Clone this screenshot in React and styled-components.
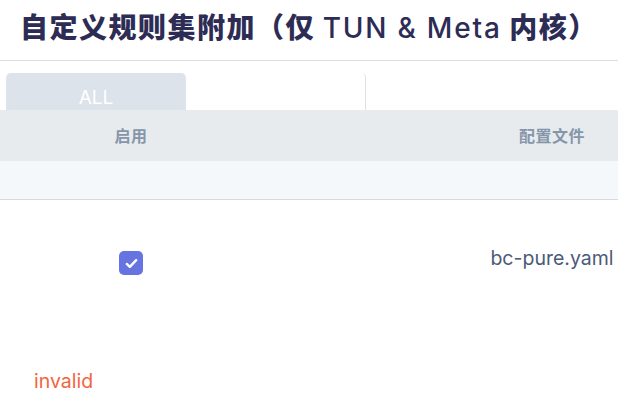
import React from "react";
import styled, { createGlobalStyle } from "styled-components";

const Global = createGlobalStyle`
  html, body {
    margin: 0;
    padding: 0;
    background: #fff;
    font-family: Inter, "Noto Sans", "Noto Sans CJK SC", sans-serif;
    overflow: hidden;
  }
`;

const Page = styled.div`
  width: 618px;
  height: 397px;
  display: flex;
  flex-direction: column;
`;

const Header = styled.header`
  height: 61px;
  border-bottom: 1px solid #dedede;
  display: flex;
  align-items: center;
  padding: 0 20px 8px;
  box-sizing: border-box;
`;

const Title = styled.h1`
  margin: 0;
  font-size: 28px;
  font-weight: 800;
  color: #2d2c55;
  letter-spacing: 1.5px;
  white-space: nowrap;
  font-family: Inter, "Noto Sans CJK SC", sans-serif;
`;

const Latin = styled.span`
  font-weight: 500;
  letter-spacing: 1.8px;
`;

const Tabs = styled.div`
  display: flex;
  padding: 12px 0 0 6px;
`;

const Tab = styled.div`
  width: 180px;
  height: 37px;
  box-sizing: border-box;
  display: flex;
  align-items: flex-end;
  justify-content: center;
  padding-bottom: 1px;
  font-size: 19px;
  color: #fff;
  border-radius: 5px 5px 0 0;
  background: ${({ $active }) => ($active ? "#dce3ea" : "#fff")};
  border-right: ${({ $active }) => ($active ? "none" : "1px solid #e0e0e0")};
`;

const Grid = styled.div`
  display: grid;
  grid-template-columns: 262px 224px 132px;
  align-items: center;
  justify-items: center;
  height: ${({ $h }) => $h}px;
  background: ${({ $bg }) => $bg};
  border-bottom: ${({ $line }) => ($line ? "1px solid #dadada" : "none")};
`;

const HeadCell = styled.div`
  font-size: 16px;
  font-weight: 700;
  color: #8596aa;
  letter-spacing: 0.5px;
  font-family: "Noto Sans CJK SC", sans-serif;
  padding-bottom: 2px;
`;

const Check = styled.span`
  width: 24px;
  height: 24px;
  border-radius: 5px;
  background: #6674e2;
  display: flex;
  align-items: center;
  justify-content: center;
`;

const FileName = styled.div`
  font-size: 19.5px;
  color: #4b5a78;
  padding-bottom: 10px;
  white-space: nowrap;
`;

const Invalid = styled.div`
  padding: 43px 0 0 34px;
  font-size: 19.5px;
  color: #f3643f;
`;

export default function App() {
  return (
    <Page>
      <Global />
      <Header>
        <Title>
          自定义规则集附加（仅 <Latin>TUN &amp; Meta</Latin> 内核）
        </Title>
      </Header>
      <Tabs>
        <Tab $active>ALL</Tab>
        <Tab />
      </Tabs>
      <Grid $h={51} $bg="#e7ebee">
        <HeadCell>启用</HeadCell>
        <span />
        <HeadCell>配置文件</HeadCell>
      </Grid>
      <Grid $h={38} $bg="#f4f8fb" $line />
      <Grid $h={126} $bg="#fff">
        <Check>
          <svg width="15" height="15" viewBox="0 0 16 16">
            <path d="M3 8.5l3.2 3L13 4.5" fill="none" stroke="#fff" strokeWidth="2.6" strokeLinecap="round" strokeLinejoin="round" />
          </svg>
        </Check>
        <span />
        <FileName>bc-pure.yaml</FileName>
      </Grid>
      <Invalid>invalid</Invalid>
    </Page>
  );
}
